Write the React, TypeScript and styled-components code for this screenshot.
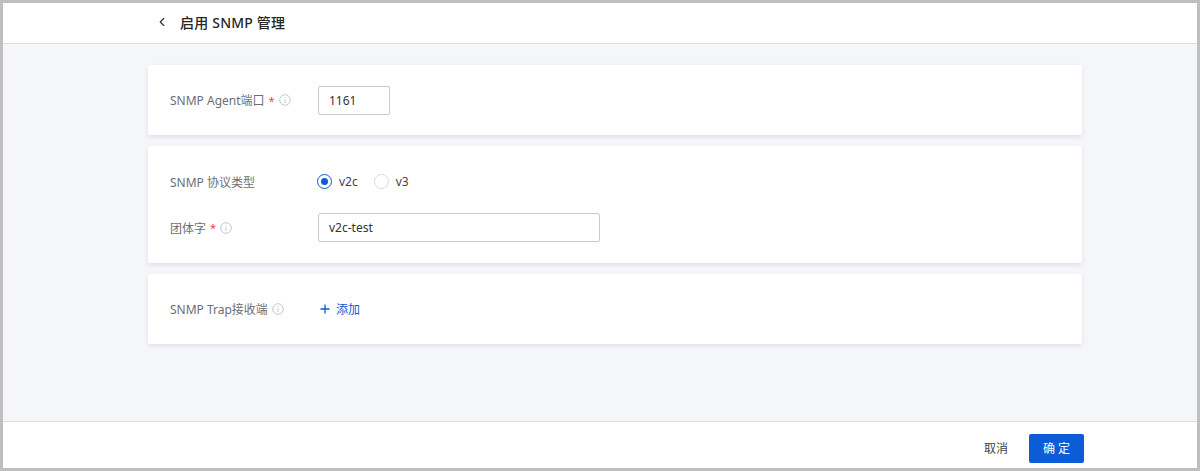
import { createGlobalStyle } from 'styled-components';
import styled from 'styled-components';
import { ChevronLeft, Plus } from 'lucide-react';

const GlobalStyle = createGlobalStyle`
  html, body {
    margin: 0;
    padding: 0;
    height: 100%;
  }
  #root {
    height: 100%;
  }
  * {
    box-sizing: border-box;
  }
`;

const Frame = styled.div`
  width: 1200px;
  height: 471px;
  border: 3px solid #bfbfbf;
  background: #f5f6fa;
  display: flex;
  flex-direction: column;
  font-family: "Noto Sans", "Noto Sans CJK SC", sans-serif;
  color: #333;
  overflow: hidden;
`;

const Header = styled.header`
  height: 41px;
  flex: none;
  background: #fff;
  border-bottom: 1px solid #dcdfe6;
  padding: 0 0 3px 152px;
  display: flex;
  align-items: center;
  gap: 11px;
`;

const BackButton = styled.span`
  display: flex;
  color: #333;
`;

const Title = styled.h1`
  margin: 0;
  font-size: 14px;
  font-weight: 500;
  letter-spacing: 0.2px;
  color: #262626;
`;

const Content = styled.main`
  flex: 1;
  padding: 21px 115px 0 145px;
  display: flex;
  flex-direction: column;
  gap: 11px;
`;

const Card = styled.section<{ $height: number }>`
  height: ${p => p.$height}px;
  background: #fff;
  border-radius: 2px;
  box-shadow: 0 2px 4px rgba(30, 40, 70, 0.1);
  padding: 0 22px;
  display: flex;
  flex-direction: column;
  justify-content: center;
  gap: 17px;
`;

const Row = styled.div`
  display: flex;
  align-items: center;
  min-height: 29px;
`;

const Label = styled.div`
  width: 147px;
  flex: none;
  display: flex;
  align-items: center;
  font-size: 12px;
  color: #6b6f76;
  white-space: pre;
`;

const Required = styled.span`
  color: #f0414a;
  font-size: 11px;
  margin-left: 4px;
`;

const InfoMark = styled.span`
  display: flex;
  margin-left: 4px;
  color: #c4c7cc;
`;

const TextField = styled.div<{ $width: number }>`
  width: ${p => p.$width}px;
  height: 29px;
  margin-left: 1px;
  border: 1px solid #c8cacf;
  border-radius: 2px;
  padding: 0 10px;
  display: flex;
  align-items: center;
  font-size: 12px;
  color: #333;
`;

const RadioGroup = styled.div`
  display: flex;
  align-items: center;
  gap: 16px;
`;

const RadioOption = styled.label`
  display: flex;
  align-items: center;
  gap: 7px;
  font-size: 12px;
  color: #444;
`;

const RadioCircle = styled.span<{ $checked?: boolean }>`
  width: 15px;
  height: 15px;
  border-radius: 50%;
  border: 1px solid ${p => (p.$checked ? '#0b5cd6' : '#d8dade')};
  display: flex;
  align-items: center;
  justify-content: center;

  &::after {
    content: '';
    width: 7px;
    height: 7px;
    border-radius: 50%;
    background: ${p => (p.$checked ? '#0b5cd6' : 'transparent')};
  }
`;

const AddLink = styled.a`
  display: flex;
  align-items: center;
  gap: 4px;
  padding-left: 1px;
  font-size: 12px;
  color: #0b5cd6;
`;

const Footer = styled.footer`
  height: 47px;
  flex: none;
  background: #fff;
  border-top: 1px solid #d9dbe0;
  padding: 6px 113px 0 0;
  display: flex;
  align-items: center;
  justify-content: flex-end;
  gap: 21px;
`;

const CancelButton = styled.button`
  border: none;
  background: none;
  padding: 0;
  font: inherit;
  font-size: 12px;
  color: #444;
`;

const ConfirmButton = styled.button`
  width: 55px;
  height: 29px;
  border: none;
  border-radius: 2px;
  background: #0b5cd6;
  color: #fff;
  font: inherit;
  font-size: 12px;
  white-space: pre;
`;

function Info() {
  return (
    <InfoMark>
      <svg width="12" height="12" viewBox="0 0 12 12" fill="none" stroke="currentColor" strokeWidth="1">
        <circle cx="6" cy="6" r="5.3" />
        <path d="M6 5.2V9M6 3v1.1" />
      </svg>
    </InfoMark>
  );
}

export default function App() {
  return (
    <>
      <GlobalStyle />
      <Frame>
        <Header>
          <BackButton>
            <ChevronLeft size={14} />
          </BackButton>
          <Title>启用 SNMP 管理</Title>
        </Header>
        <Content>
          <Card $height={70}>
            <Row>
              <Label>
                SNMP Agent端口<Required>*</Required>
                <Info />
              </Label>
              <TextField $width={72}>1161</TextField>
            </Row>
          </Card>
          <Card $height={117}>
            <Row>
              <Label>SNMP 协议类型</Label>
              <RadioGroup>
                <RadioOption>
                  <RadioCircle $checked />
                  v2c
                </RadioOption>
                <RadioOption>
                  <RadioCircle />
                  v3
                </RadioOption>
              </RadioGroup>
            </Row>
            <Row>
              <Label>
                团体字<Required>*</Required>
                <Info />
              </Label>
              <TextField $width={282}>v2c-test</TextField>
            </Row>
          </Card>
          <Card $height={70}>
            <Row>
              <Label>
                SNMP Trap接收端
                <Info />
              </Label>
              <AddLink>
                <Plus size={14} strokeWidth={2.2} />
                添加
              </AddLink>
            </Row>
          </Card>
        </Content>
        <Footer>
          <CancelButton>取消</CancelButton>
          <ConfirmButton>确 定</ConfirmButton>
        </Footer>
      </Frame>
    </>
  );
}
